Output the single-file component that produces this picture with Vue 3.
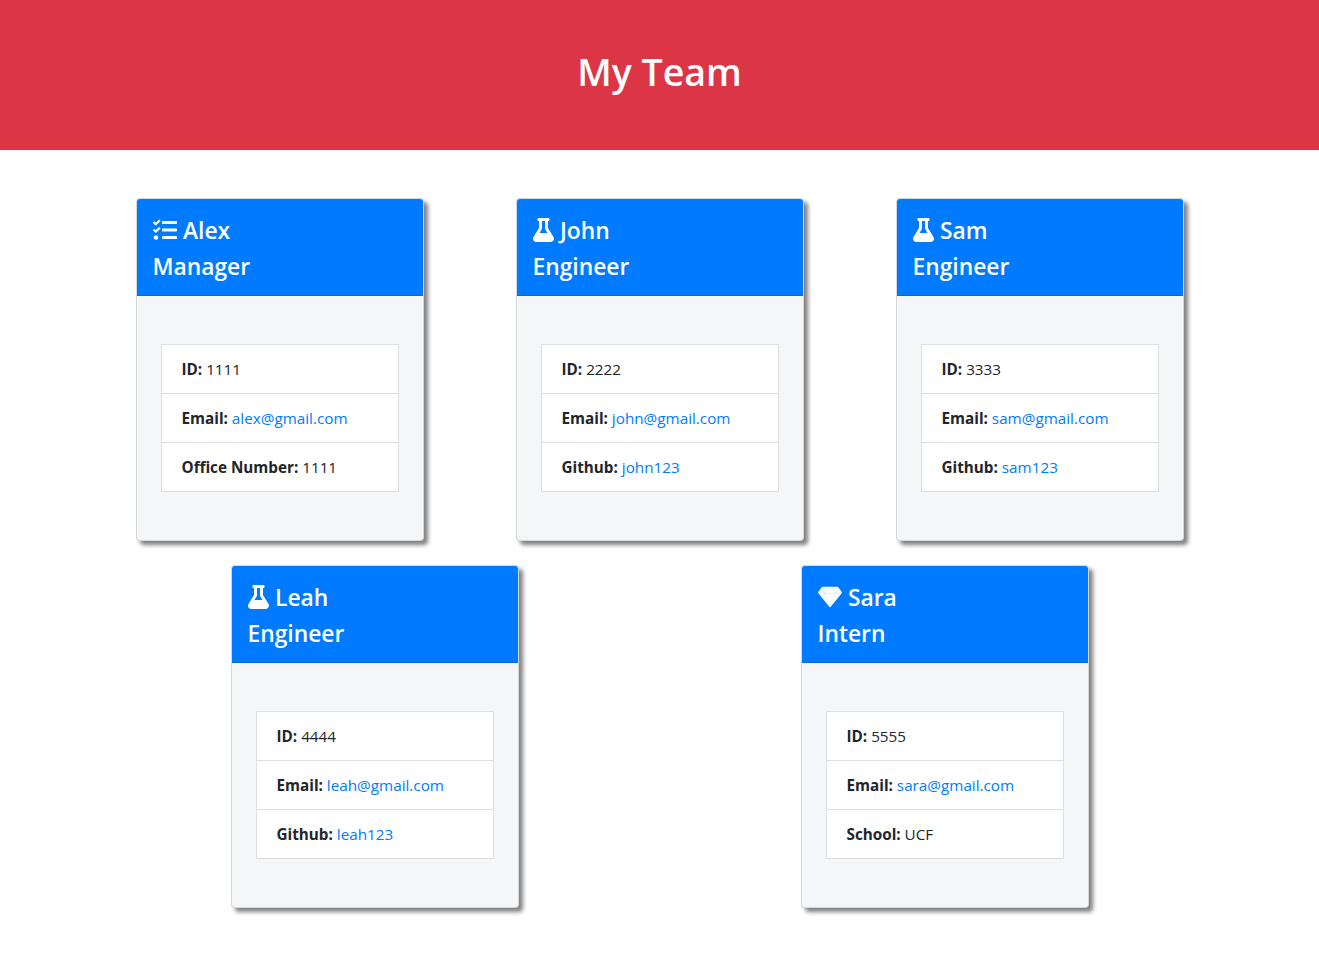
<template>
    <div>
        <header class="banner">
            <h1>My Team</h1>
        </header>
        <div class="team">
            <div class="card" v-for="member of team" :key="member.id">
                <div class="card-head">
                    <h2>
                        <svg class="icon" :viewBox="icons[member.role].box" :style="{ width: icons[member.role].width + 'px' }">
                            <path fill="currentColor" :d="icons[member.role].path" />
                            <path v-if="icons[member.role].lines" class="facets" :d="icons[member.role].lines" />
                        </svg>
                        {{ member.name }}
                    </h2>
                    <h2>{{ member.role }}</h2>
                </div>
                <div class="card-body">
                    <ul class="info">
                        <li><b>ID:</b> {{ member.id }}</li>
                        <li><b>Email:</b> <a href="#">{{ member.email }}</a></li>
                        <li v-if="member.extraLink"><b>{{ member.extraLabel }}:</b> <a href="#">{{ member.extra }}</a></li>
                        <li v-else><b>{{ member.extraLabel }}:</b> {{ member.extra }}</li>
                    </ul>
                </div>
            </div>
        </div>
    </div>
</template>

<script setup>
const icons = {
    Manager: {
        box: '0 0 512 512',
        width: 24,
        path: 'M139.61 35.5a12 12 0 0 0-17 0L58.93 98.81l-22.7-22.12a12 12 0 0 0-17 0L3.53 92.41a12 12 0 0 0 0 17l47.59 47.4a12.78 12.78 0 0 0 17.61 0l15.59-15.62L156.52 69a12.09 12.09 0 0 0 .09-17zm0 159.19a12 12 0 0 0-17 0l-63.68 63.72-22.7-22.1a12 12 0 0 0-17 0L3.53 252a12 12 0 0 0 0 17L51 316.5a12.77 12.77 0 0 0 17.6 0l15.7-15.69 72.2-72.22a12 12 0 0 0 .09-16.9zM64 368c-26.49 0-48.59 21.5-48.59 48S37.53 464 64 464a48 48 0 0 0 0-96zm432 16H208a16 16 0 0 0-16 16v32a16 16 0 0 0 16 16h288a16 16 0 0 0 16-16v-32a16 16 0 0 0-16-16zm0-320H208a16 16 0 0 0-16 16v32a16 16 0 0 0 16 16h288a16 16 0 0 0 16-16V80a16 16 0 0 0-16-16zm0 160H208a16 16 0 0 0-16 16v32a16 16 0 0 0 16 16h288a16 16 0 0 0 16-16v-32a16 16 0 0 0-16-16z'
    },
    Engineer: {
        box: '0 0 448 512',
        width: 21,
        path: 'M437.2 403.5L320 215V64h8c13.3 0 24-10.7 24-24V24c0-13.3-10.7-24-24-24H120c-13.3 0-24 10.7-24 24v16c0 13.3 10.7 24 24 24h8v151L10.8 403.5C-18.5 450.6 15.3 512 70.9 512h306.2c55.7 0 89.4-61.5 60.1-108.5zM137.9 320l48.2-77.6c3.7-5.2 5.8-11.6 5.8-18.4V64h64v160c0 6.9 2.2 13.2 5.8 18.4l48.2 77.6h-172z'
    },
    Intern: {
        box: '0 0 576 512',
        width: 24,
        // solid silhouette with the facet lines laid faintly on top
        path: 'M115 10H461Q478 10 488 24L566 130Q580 150 564 170L300 498Q288 512 276 498L12 170Q-4 150 10 130L88 24Q98 10 115 10z',
        lines: 'M8 165H568M218 10L149 165L288 500L427 165L358 10M90 12L149 165M486 12L427 165'
    }
};

const team = [
    { name: 'Alex', role: 'Manager', id: 1111, email: 'alex@gmail.com', extraLabel: 'Office Number', extra: '1111' },
    { name: 'John', role: 'Engineer', id: 2222, email: 'john@gmail.com', extraLabel: 'Github', extra: 'john123', extraLink: true },
    { name: 'Sam', role: 'Engineer', id: 3333, email: 'sam@gmail.com', extraLabel: 'Github', extra: 'sam123', extraLink: true },
    { name: 'Leah', role: 'Engineer', id: 4444, email: 'leah@gmail.com', extraLabel: 'Github', extra: 'leah123', extraLink: true },
    { name: 'Sara', role: 'Intern', id: 5555, email: 'sara@gmail.com', extraLabel: 'School', extra: 'UCF' }
];
</script>

<style scoped>
.banner {
    background-color: #dc3545;
    color: #fff;
    text-align: center;
    padding: 48px 0 54px;
}

h1 {
    margin: 0;
    font-size: 37.5px;
    line-height: 48px;
    font-weight: 600;
}

.team {
    width: 1140px;
    margin: 0 auto;
    padding: 48px 0;
    display: flex;
    flex-wrap: wrap;
    justify-content: space-around;
    row-gap: 24px;
}

.card {
    width: 288px;
    box-sizing: border-box;
    border: 1px solid rgba(0, 0, 0, 0.125);
    border-radius: 4px;
    background-color: #f5f6f8;
    box-shadow: 4px 4px 4px #808080;
    overflow: hidden;
}

.card-head {
    background-color: #007bff;
    color: #fff;
    padding: 14px 16px 10px;
    border-bottom: 1px solid rgba(0, 0, 0, 0.125);
}

h2 {
    margin: 0;
    font-size: 22.8px;
    line-height: 36px;
    font-weight: 600;
}

.icon {
    height: 24px;
    vertical-align: -3px;
    margin-right: 0.6px;
}

.facets {
    fill: none;
    stroke: #007bff;
    stroke-width: 10;
    stroke-opacity: 0.3;
}

.card-body {
    padding: 48px 24px;
}

.info {
    list-style: none;
    margin: 0;
    padding: 0;
    background-color: #fff;
    border: 1px solid rgba(0, 0, 0, 0.125);
}

.info li {
    padding: 12px 20px;
    line-height: 24px;
    font-size: 15.25px;
    color: #212529;
}

.info li + li {
    border-top: 1px solid rgba(0, 0, 0, 0.125);
}

a {
    color: #007bff;
    text-decoration: none;
}
</style>

<style>
body {
    font-family: "Open Sans", "Noto Sans", sans-serif;
    background-color: #fff;
}
</style>
